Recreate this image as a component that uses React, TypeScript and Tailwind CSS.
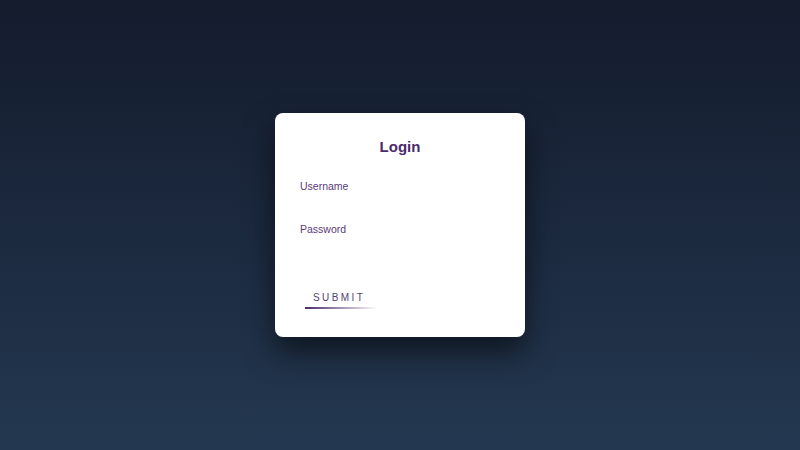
import React from "react";

function LoginCard() {
  const [username, setUsername] = React.useState("");
  const [password, setPassword] = React.useState("");

  return (
    <form
      onSubmit={(e) => e.preventDefault()}
      className="w-[250px] bg-white rounded-[8px] px-[25px] pt-[24px] pb-[28px] flex flex-col shadow-[0_15px_30px_rgba(0,0,0,0.55)]"
    >
      <h2 className="text-[15px] leading-[20px] font-bold text-center text-[#4b2a6b]">Login</h2>

      <label className="mt-[23px] text-[10.5px] leading-[13px] text-[#5b3c77]">Username</label>
      <input
        type="text"
        value={username}
        onChange={(e) => setUsername(e.target.value)}
        className="h-[30px] w-full bg-transparent outline-none text-[11px] text-[#4b2a6b]"
      />

      <label className="text-[10.5px] leading-[13px] text-[#5b3c77]">Password</label>
      <input
        type="password"
        value={password}
        onChange={(e) => setPassword(e.target.value)}
        className="h-[30px] w-full bg-transparent outline-none text-[11px] text-[#4b2a6b]"
      />

      <button type="submit" className="mt-[26px] self-start ml-[5px] flex flex-col items-start">
        <span className="pl-[8px] text-[10px] leading-[12px] tracking-[0.24em] text-[#524070]">SUBMIT</span>
        <span className="mt-[3px] h-[2px] w-[73px] bg-gradient-to-r from-[#4b2a6b] to-transparent" />
      </button>
    </form>
  );
}

export default function App() {
  return (
    <div
      className="h-screen w-full flex items-center justify-center bg-gradient-to-b from-[#141b2d] to-[#233850]"
      style={{ fontFamily: '"Liberation Sans", Arial, sans-serif' }}
    >
      <LoginCard />
    </div>
  );
}
